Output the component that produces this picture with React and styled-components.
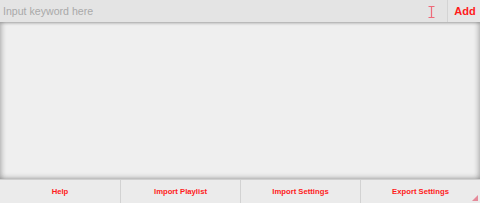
import React from "react";
import styled, { createGlobalStyle } from "styled-components";

const GlobalStyle = createGlobalStyle`
  html, body {
    margin: 0;
    padding: 0;
    height: 100%;
  }
  body {
    font-family: "Liberation Sans", Arial, sans-serif;
    background: #efefef;
    overflow: hidden;
  }
  #root {
    height: 100%;
  }
`;

export default function App() {
  const buttons = ["Help", "Import Playlist", "Import Settings", "Export Settings"];

  return (
    <>
      <GlobalStyle />
      <Frame>
        <SearchBar>
          <InputWrap>
            <KeywordInput placeholder="Input keyword here" autoFocus />
            <CursorMark>
              <svg width="7" height="12" viewBox="0 0 7 12">
                <path d="M0.5 0.5h6M3.5 0.5v11M0.5 11.5h6" stroke="#ee6a7a" strokeWidth="1.2" fill="none" />
              </svg>
            </CursorMark>
          </InputWrap>
          <AddButton>Add</AddButton>
        </SearchBar>
        <ListArea />
        <Footer>
          {buttons.map((label) => (
            <FooterButton key={label}>{label}</FooterButton>
          ))}
          <Grip>
            <svg width="6" height="6" viewBox="0 0 6 6">
              <path d="M6 0L6 6L0 6Z" fill="#e58a9a" />
            </svg>
          </Grip>
        </Footer>
      </Frame>
    </>
  );
}

const Frame = styled.div`
  display: flex;
  flex-direction: column;
  height: 203px;
  width: 480px;
  position: relative;
`;

const SearchBar = styled.div`
  display: flex;
  height: 22px;
  background: #e4e4e4;
  box-shadow: 0 1px 3px rgba(0, 0, 0, 0.25);
  position: relative;
  z-index: 1;
`;

const InputWrap = styled.div`
  flex: 1;
  display: flex;
  align-items: center;
  position: relative;
`;

const KeywordInput = styled.input`
  flex: 1;
  height: 100%;
  border: none;
  outline: none;
  background: transparent;
  padding: 0 0 0 3px;
  font-family: "Liberation Sans", Arial, sans-serif;
  font-size: 10.6px;
  color: #444;
  caret-color: #666;
  &::placeholder {
    color: #a9a9a9;
  }
`;

const CursorMark = styled.span`
  position: absolute;
  right: 12px;
  top: 6px;
  display: flex;
`;

const AddButton = styled.button`
  width: 33px;
  border: none;
  border-left: 1px solid #d4d4d4;
  background: #e6e6e6;
  color: #ff1a1a;
  font-family: "Liberation Sans", Arial, sans-serif;
  font-weight: bold;
  font-size: 11px;
  padding: 0 0 0 2px;
  cursor: pointer;
`;

const ListArea = styled.div`
  flex: 1;
  background: #efefef;
  box-shadow: inset 4px 0 5px -2px rgba(0, 0, 0, 0.22),
    inset -4px 0 5px -2px rgba(0, 0, 0, 0.22),
    inset 0 -4px 5px -2px rgba(0, 0, 0, 0.18);
`;

const Footer = styled.div`
  display: grid;
  grid-template-columns: repeat(4, 1fr);
  height: 23px;
  border-top: 1px solid #cfcfcf;
  background: #ebebeb;
  position: relative;
`;

const FooterButton = styled.button`
  border: none;
  border-left: 1px solid #d2d2d2;
  background: transparent;
  color: #ff1a1a;
  font-family: "Liberation Sans", Arial, sans-serif;
  font-weight: bold;
  font-size: 7.7px;
  padding: 0;
  cursor: pointer;
  &:first-child {
    border-left: none;
  }
`;

const Grip = styled.span`
  position: absolute;
  right: 2px;
  bottom: 2px;
  display: flex;
`;
